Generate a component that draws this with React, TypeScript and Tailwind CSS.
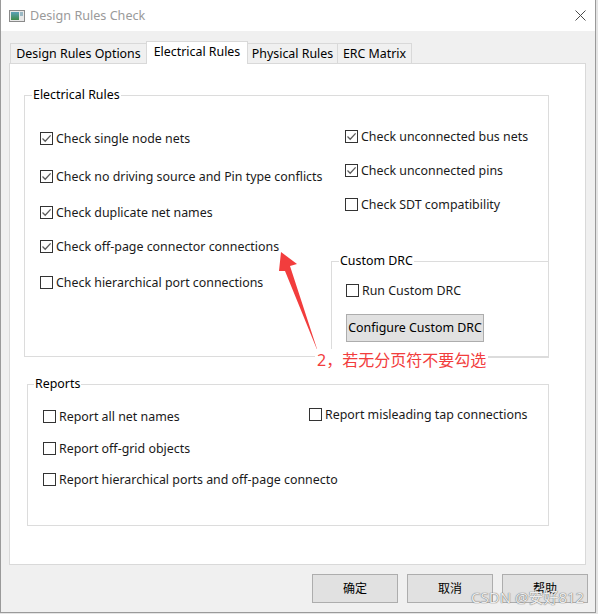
import React from "react";

const leftRules = [
  { label: "Check single node nets", checked: true, gap: "mt-0" },
  { label: "Check no driving source and Pin type conflicts", checked: true, gap: "mt-[20px]" },
  { label: "Check duplicate net names", checked: true, gap: "mt-[18px]" },
  { label: "Check off-page connector connections", checked: true, gap: "mt-[16px]" },
  { label: "Check hierarchical port connections", checked: false, gap: "mt-[18px]" },
];

const rightRules = [
  { label: "Check unconnected bus nets", checked: true, gap: "mt-0" },
  { label: "Check unconnected pins", checked: true, gap: "mt-[16px]" },
  { label: "Check SDT compatibility", checked: false, gap: "mt-[16px]" },
];

const reports = [
  { label: "Report all net names", gap: "mt-0" },
  { label: "Report off-grid objects", gap: "mt-[14px]" },
  { label: "Report hierarchical ports and off-page connecto", gap: "mt-[13px]" },
];

function Box({ checked }: { checked?: boolean }) {
  return (
    <span className="w-[13px] h-[13px] border border-[#333333] bg-white flex items-center justify-center shrink-0">
      {checked && (
        <svg width="11" height="11" viewBox="0 0 11 11">
          <path d="M1.5 5.5 L4.2 8.2 L9.6 2.4" fill="none" stroke="#5c5c5c" strokeWidth="1.3" />
        </svg>
      )}
    </span>
  );
}

function Check({ label, checked, className = "" }: { label: string; checked?: boolean; className?: string }) {
  return (
    <div className={`flex items-center gap-[3px] h-[18px] ${className}`}>
      <Box checked={checked} />
      <span className="whitespace-nowrap text-[#1a1a1a] pt-[1px]">{label}</span>
    </div>
  );
}

function Tab({ label, active, className = "" }: { label: string; active?: boolean; className?: string }) {
  return (
    <div
      className={`flex items-center justify-center border border-b-0 border-[#d9d9d9] whitespace-nowrap ${
        active ? "h-[23px] -mb-px bg-white relative z-10 pb-[2px]" : "h-[20px] bg-[#f0f0f0]"
      } ${className}`}
    >
      {label}
    </div>
  );
}

export default function App() {
  return (
    <div className="w-[598px] h-[614px] bg-[#e4e4e4] relative overflow-hidden text-[12.4px] leading-[18px] text-black font-['Noto_Sans','Noto_Sans_CJK_SC',sans-serif]">
      <div className="w-[596px] h-[613px] border-x border-b border-[#9a9a9a] bg-[#f0f0f0] flex flex-col">
        {/* title bar */}
        <div className="h-[31px] bg-white flex items-center shrink-0">
          <svg className="ml-[8px]" width="16" height="12" viewBox="0 0 16 12">
            <defs>
              <linearGradient id="ico" x1="0" y1="0" x2="0" y2="1">
                <stop offset="0" stopColor="#5aa0b8" />
                <stop offset="1" stopColor="#3f8a4a" />
              </linearGradient>
            </defs>
            <rect x="0.5" y="0.5" width="15" height="11" fill="#e8e8e8" stroke="#8a8a8a" />
            <rect x="2" y="2" width="8" height="8" fill="url(#ico)" />
            <rect x="11" y="2" width="3" height="4" fill="#9ab8c4" />
          </svg>
          <span className="ml-[5px] text-[12.6px] text-[#9a9a9a]">Design Rules Check</span>
          <svg className="ml-auto mr-[9px]" width="11" height="11" viewBox="0 0 11 11">
            <path d="M0.5 0.5 L10.5 10.5 M10.5 0.5 L0.5 10.5" stroke="#4a4a4a" strokeWidth="1" />
          </svg>
        </div>

        {/* body */}
        <div className="flex-1 flex flex-col pl-[8px] pr-[9px]">
          <div className="mt-[10px] h-[22px] flex items-end pl-[1px]">
            <Tab label="Design Rules Options" className="w-[137px]" />
            <Tab label="Electrical Rules" active className="w-[102px] -ml-px" />
            <Tab label="Physical Rules" className="w-[91px] -ml-px" />
            <Tab label="ERC Matrix" className="w-[75px] -ml-px" />
          </div>

          <div className="h-[502px] border border-[#d9d9d9] bg-white flex flex-col pl-[14px]">
            {/* Electrical Rules */}
            <fieldset className="mt-[22px] w-[525px] h-[271px] border border-[#dcdcdc]">
              <legend className="ml-[7px] px-[1px] leading-[18px]">Electrical Rules</legend>
              <div className="flex">
                <div className="w-[306px] pl-[15px] pt-[25px] flex flex-col">
                  {leftRules.map((r) => (
                    <Check key={r.label} label={r.label} checked={r.checked} className={r.gap} />
                  ))}
                </div>
                <div className="flex-1 flex flex-col pt-[23px]">
                  {rightRules.map((r) => (
                    <Check key={r.label} label={r.label} checked={r.checked} className={`pl-[14px] ${r.gap}`} />
                  ))}
                  <fieldset className="mt-[39px] -mr-px h-[106px] border border-[#dcdcdc]">
                    <legend className="ml-[7px] px-[1px] leading-[18px]">Custom DRC</legend>
                    <div className="pl-[14px] pt-[11px] flex flex-col">
                      <Check label="Run Custom DRC" />
                      <button className="mt-[15px] w-[138px] h-[28px] bg-[#e1e1e1] border border-[#adadad] flex items-center justify-center whitespace-nowrap">
                        Configure Custom DRC
                      </button>
                    </div>
                  </fieldset>
                </div>
              </div>
            </fieldset>

            {/* Reports */}
            <fieldset className="mt-[18px] ml-[3px] w-[522px] h-[151px] border border-[#dcdcdc]">
              <legend className="ml-[6px] px-[1px] leading-[18px]">Reports</legend>
              <div className="flex">
                <div className="w-[281px] pl-[15px] pt-[14px] flex flex-col">
                  {reports.map((r) => (
                    <Check key={r.label} label={r.label} className={r.gap} />
                  ))}
                </div>
                <div className="pt-[12px]">
                  <Check label="Report misleading tap connections" />
                </div>
              </div>
            </fieldset>
          </div>

          <div className="mt-[9px] -mr-[2px] flex justify-end gap-[9px]">
            {["确定", "取消", "帮助"].map((t) => (
              <button key={t} className="w-[86px] h-[29px] bg-[#e1e1e1] border border-[#adadad] flex items-center justify-center text-[12px]">
                {t}
              </button>
            ))}
          </div>
        </div>
      </div>

      {/* annotation arrow */}
      <svg className="absolute left-0 top-0 pointer-events-none" width="598" height="614">
        <polygon points="281,252 297,264 290,266 318,352 285,271 279,271" fill="#f23d3d" />
      </svg>
      <div className="absolute left-[315px] top-[349px] bg-white px-[2px] text-[16px] leading-[22px] text-[#f23d3d] whitespace-nowrap">
        2，若无分页符不要勾选
      </div>

      {/* watermark */}
      <div className="absolute left-[471px] top-[587px] text-[15px] leading-[20px] text-[#ececec] whitespace-nowrap [text-shadow:0_0_1px_#707070,0_0_1px_#707070]">
        CSDN @安好812
      </div>
    </div>
  );
}
